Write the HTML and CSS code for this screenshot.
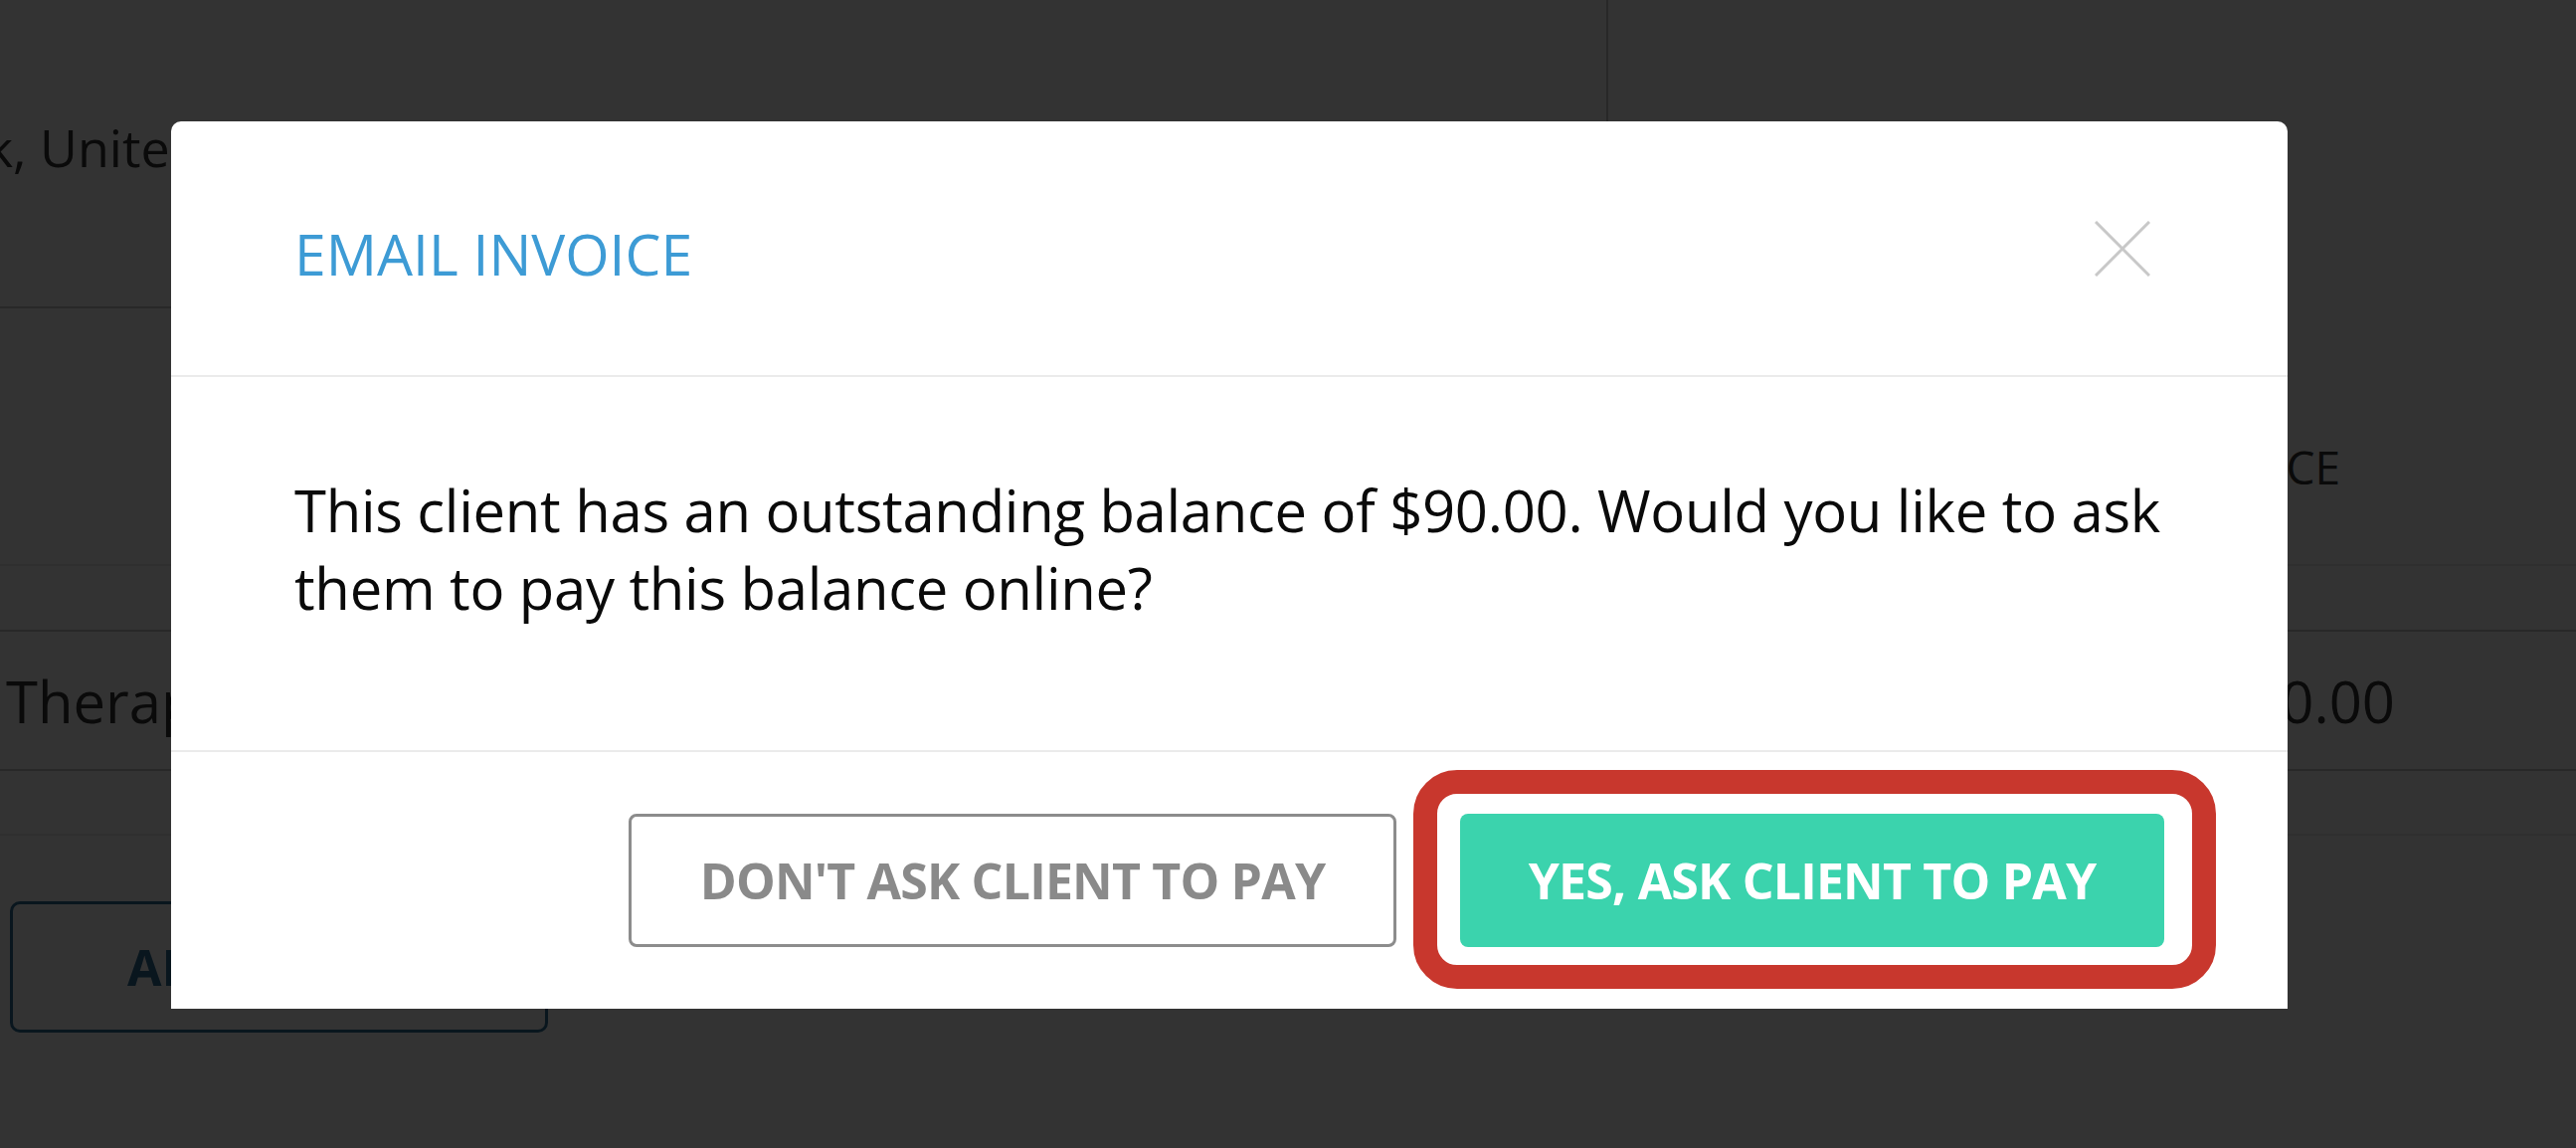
FILE: index.html
```html
<!DOCTYPE html>
<html lang="en">
<head>
    <meta charset="UTF-8">
    <meta name="viewport" content="width=device-width, initial-scale=1.0">
    <title>Email Invoice</title>
    <link rel="stylesheet" href="styles.css">
</head>
<body>
    <!-- Invoice page behind the dialog -->
    <div class="page">
        <div class="top">
            <div class="address"><span>New York, United States</span></div>
            <div class="meta"></div>
        </div>

        <div class="table-head">
            <span>PRICE</span>
        </div>
        <div class="rule-gap"></div>
        <div class="item-row">
            <span class="item-name">Therapy Session</span>
            <span class="item-price">$90.00</span>
        </div>
        <div class="rule-gap bottom"></div>

        <div class="actions">
            <button class="outline-btn">ADD ITEM</button>
        </div>
    </div>

    <div class="backdrop"></div>

    <!-- Email Invoice Dialog -->
    <div class="modal">
        <div class="modal-header">
            <h3>EMAIL INVOICE</h3>
            <button class="close-btn" aria-label="Close">
                <svg width="56" height="56" viewBox="0 0 56 56">
                    <path d="M1 1 L55 55 M55 1 L1 55" stroke="#c8c8c8" stroke-width="3" fill="none"/>
                </svg>
            </button>
        </div>
        <div class="modal-body">
            <p>This client has an outstanding balance of $90.00. Would you like to ask them to pay this balance online?</p>
        </div>
        <div class="modal-footer">
            <button class="btn btn-secondary">DON'T ASK CLIENT TO PAY</button>
            <div class="primary-wrap">
                <button class="btn btn-primary">YES, ASK CLIENT TO PAY</button>
                <span class="highlight"></span>
            </div>
        </div>
    </div>
</body>
</html>
```

FILE: styles.css
```css
body {
    font-family: 'Open Sans', 'Noto Sans', sans-serif;
    margin: 0;
    padding: 0;
    background-color: #ffffff;
    color: #333;
    width: 2590px;
    height: 1154px;
    overflow: hidden;
}

/* Page behind the dialog */
.page {
    width: 100%;
}
.top {
    display: grid;
    grid-template-columns: 1617px 1fr;
    height: 310px;
}
.address {
    border-right: 2px solid #c8c8c8;
    border-bottom: 2px solid #c8c8c8;
    font-size: 52px;
    padding-top: 112px;
    box-sizing: border-box;
    white-space: nowrap;
    overflow: hidden;
}
.address span {
    display: block;
    margin-left: -218px;
}
.table-head {
    height: 259px;
    padding: 128px 237px 0 0;
    box-sizing: border-box;
    text-align: right;
    font-size: 46px;
    border-bottom: 2px solid #ebebeb;
}
.rule-gap {
    height: 64px;
    border-bottom: 2px solid #c8c8c8;
}
.rule-gap.bottom {
    height: 63px;
    border-bottom: 2px solid #ebebeb;
}
.item-row {
    height: 138px;
    display: flex;
    align-items: center;
    justify-content: space-between;
    padding: 0 182px 0 6px;
    font-size: 58px;
    border-bottom: 2px solid #c8c8c8;
}
.actions {
    padding: 66px 0 0 10px;
}
.outline-btn {
    width: 541px;
    height: 132px;
    padding: 0 0 0 115px;
    border: 3px solid #2f6d96;
    border-radius: 10px;
    background: #fff;
    color: #2f6d96;
    font-family: inherit;
    font-weight: 700;
    font-size: 50px;
    text-align: left;
}

.backdrop {
    position: fixed;
    top: 0;
    left: 0;
    right: 0;
    bottom: 0;
    background-color: rgba(0, 0, 0, 0.8);
}

/* Dialog */
.modal {
    position: absolute;
    top: 122px;
    left: 172px;
    width: 2128px;
    height: 892px;
    background-color: #ffffff;
    border-radius: 10px 10px 0 0;
    display: flex;
    flex-direction: column;
}
.modal-header {
    height: 257px;
    padding: 0 138px 0 124px;
    box-sizing: border-box;
    display: flex;
    align-items: center;
    justify-content: space-between;
    border-bottom: 2px solid #ebebeb;
}
.modal-header h3 {
    margin: 10px 0 0;
    font-weight: 400;
    font-size: 57px;
    color: #3d9bd5;
}
.close-btn {
    background: none;
    border: none;
    padding: 0;
    width: 56px;
    height: 56px;
    cursor: pointer;
}
.close-btn svg {
    display: block;
}
.modal-body {
    height: 377px;
    padding: 95px 124px 0;
    box-sizing: border-box;
    border-bottom: 2px solid #ebebeb;
}
.modal-body p {
    margin: 0;
    font-size: 58px;
    line-height: 78px;
    letter-spacing: -0.3px;
    color: #0a0a0a;
}
.modal-footer {
    flex: 1;
    padding: 0 124px;
    display: flex;
    align-items: center;
    justify-content: flex-end;
    gap: 64px;
}
.btn {
    height: 134px;
    border-radius: 8px;
    font-family: inherit;
    font-weight: 700;
    font-size: 50px;
    letter-spacing: -0.8px;
    cursor: pointer;
}
.btn-secondary {
    width: 772px;
    background: #ffffff;
    border: 3px solid #8c8c8c;
    color: #8a8a8a;
}
.btn-primary {
    width: 708px;
    background: #3bd3ad;
    border: none;
    color: #ffffff;
}
.primary-wrap {
    position: relative;
    display: flex;
}
/* red callout drawn around the primary button */
.highlight {
    position: absolute;
    top: -44px;
    left: -47px;
    right: -52px;
    bottom: -42px;
    border: 24px solid #c8372d;
    border-radius: 44px;
    pointer-events: none;
}
```
